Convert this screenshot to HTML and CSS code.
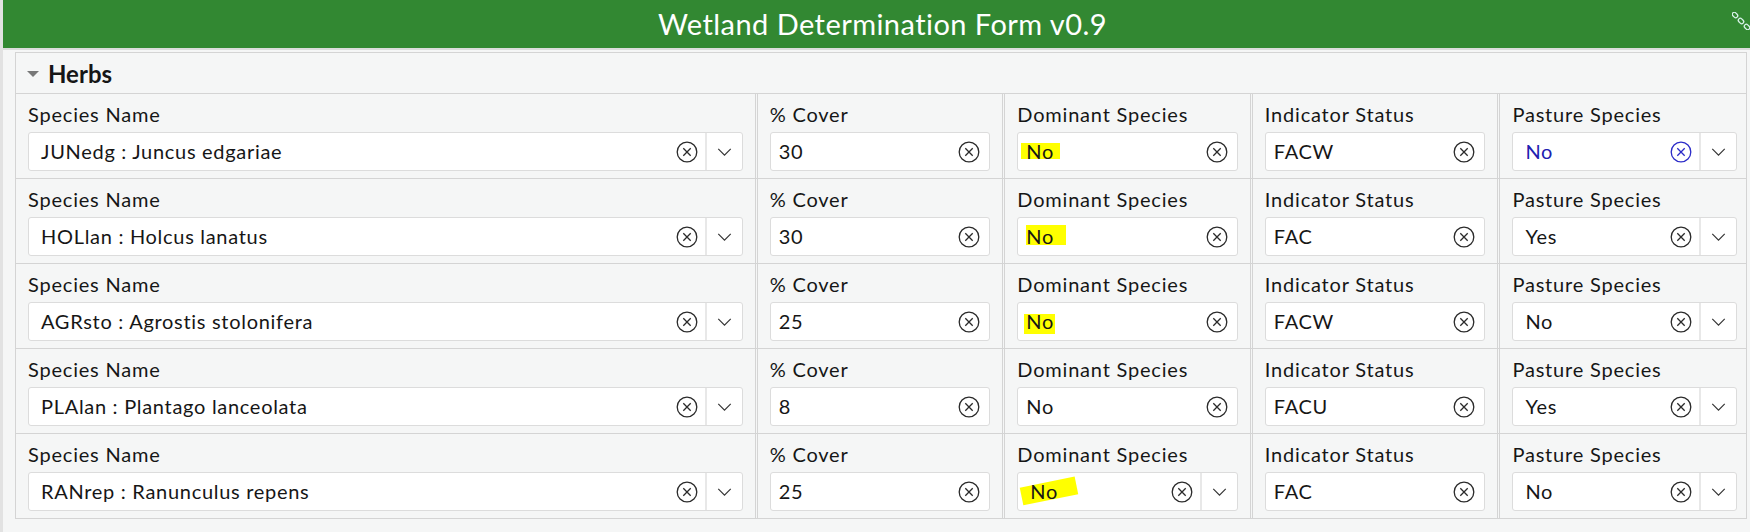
FILE: index.html
```html
<!DOCTYPE html>
<html lang="en">
<head>
<meta charset="utf-8">
<title>Wetland Determination Form v0.9</title>
<link rel="stylesheet" href="styles.css">
</head>
<body>
<div class="page">
  <header class="appbar">
    <span class="title">Wetland Determination Form v0.9</span>
    <svg class="appbar-icon" viewBox="0 0 18 18" aria-hidden="true">
      <g transform="rotate(45 9 9)" fill="none" stroke="#d9f2ea" stroke-width="1.3">
        <rect x="-2.5" y="7" width="6" height="4" rx="2"/>
        <rect x="6" y="7" width="6" height="4" rx="2"/>
        <rect x="14.5" y="7" width="6" height="4" rx="2"/>
      </g>
    </svg>
  </header>

  <section class="panel">
    <div class="group-head"><span class="caret"></span><span>Herbs</span></div>

    <div class="row">
      <div class="cell wide">
        <div class="label">Species Name</div>
        <div class="field combo"><span class="value">JUNedg : Juncus edgariae</span>
          <svg class="clear" viewBox="0 0 22 22"><circle cx="11" cy="11" r="9.8"/><path d="M7.3 7.3L14.7 14.7M14.7 7.3L7.3 14.7"/></svg>
          <span class="dd"><svg class="chev" viewBox="0 0 16 9"><path d="M1 1L8 8L15 1"/></svg></span></div>
      </div>
      <div class="cell">
        <div class="label">% Cover</div>
        <div class="field"><span class="value">30</span>
          <svg class="clear" viewBox="0 0 22 22"><circle cx="11" cy="11" r="9.8"/><path d="M7.3 7.3L14.7 14.7M14.7 7.3L7.3 14.7"/></svg></div>
      </div>
      <div class="cell">
        <div class="label">Dominant Species</div>
        <div class="field"><span class="value"><span class="hl hl-a">No</span></span>
          <svg class="clear" viewBox="0 0 22 22"><circle cx="11" cy="11" r="9.8"/><path d="M7.3 7.3L14.7 14.7M14.7 7.3L7.3 14.7"/></svg></div>
      </div>
      <div class="cell">
        <div class="label">Indicator Status</div>
        <div class="field"><span class="value">FACW</span>
          <svg class="clear" viewBox="0 0 22 22"><circle cx="11" cy="11" r="9.8"/><path d="M7.3 7.3L14.7 14.7M14.7 7.3L7.3 14.7"/></svg></div>
      </div>
      <div class="cell">
        <div class="label">Pasture Species</div>
        <div class="field combo focus"><span class="value">No</span>
          <svg class="clear" viewBox="0 0 22 22"><circle cx="11" cy="11" r="9.8"/><path d="M7.3 7.3L14.7 14.7M14.7 7.3L7.3 14.7"/></svg>
          <span class="dd"><svg class="chev" viewBox="0 0 16 9"><path d="M1 1L8 8L15 1"/></svg></span></div>
      </div>
    </div>

    <div class="row">
      <div class="cell wide">
        <div class="label">Species Name</div>
        <div class="field combo"><span class="value">HOLlan : Holcus lanatus</span>
          <svg class="clear" viewBox="0 0 22 22"><circle cx="11" cy="11" r="9.8"/><path d="M7.3 7.3L14.7 14.7M14.7 7.3L7.3 14.7"/></svg>
          <span class="dd"><svg class="chev" viewBox="0 0 16 9"><path d="M1 1L8 8L15 1"/></svg></span></div>
      </div>
      <div class="cell">
        <div class="label">% Cover</div>
        <div class="field"><span class="value">30</span>
          <svg class="clear" viewBox="0 0 22 22"><circle cx="11" cy="11" r="9.8"/><path d="M7.3 7.3L14.7 14.7M14.7 7.3L7.3 14.7"/></svg></div>
      </div>
      <div class="cell">
        <div class="label">Dominant Species</div>
        <div class="field"><span class="value"><span class="hl hl-b">No</span></span>
          <svg class="clear" viewBox="0 0 22 22"><circle cx="11" cy="11" r="9.8"/><path d="M7.3 7.3L14.7 14.7M14.7 7.3L7.3 14.7"/></svg></div>
      </div>
      <div class="cell">
        <div class="label">Indicator Status</div>
        <div class="field"><span class="value">FAC</span>
          <svg class="clear" viewBox="0 0 22 22"><circle cx="11" cy="11" r="9.8"/><path d="M7.3 7.3L14.7 14.7M14.7 7.3L7.3 14.7"/></svg></div>
      </div>
      <div class="cell">
        <div class="label">Pasture Species</div>
        <div class="field combo"><span class="value">Yes</span>
          <svg class="clear" viewBox="0 0 22 22"><circle cx="11" cy="11" r="9.8"/><path d="M7.3 7.3L14.7 14.7M14.7 7.3L7.3 14.7"/></svg>
          <span class="dd"><svg class="chev" viewBox="0 0 16 9"><path d="M1 1L8 8L15 1"/></svg></span></div>
      </div>
    </div>

    <div class="row">
      <div class="cell wide">
        <div class="label">Species Name</div>
        <div class="field combo"><span class="value">AGRsto : Agrostis stolonifera</span>
          <svg class="clear" viewBox="0 0 22 22"><circle cx="11" cy="11" r="9.8"/><path d="M7.3 7.3L14.7 14.7M14.7 7.3L7.3 14.7"/></svg>
          <span class="dd"><svg class="chev" viewBox="0 0 16 9"><path d="M1 1L8 8L15 1"/></svg></span></div>
      </div>
      <div class="cell">
        <div class="label">% Cover</div>
        <div class="field"><span class="value">25</span>
          <svg class="clear" viewBox="0 0 22 22"><circle cx="11" cy="11" r="9.8"/><path d="M7.3 7.3L14.7 14.7M14.7 7.3L7.3 14.7"/></svg></div>
      </div>
      <div class="cell">
        <div class="label">Dominant Species</div>
        <div class="field"><span class="value"><span class="hl hl-c">No</span></span>
          <svg class="clear" viewBox="0 0 22 22"><circle cx="11" cy="11" r="9.8"/><path d="M7.3 7.3L14.7 14.7M14.7 7.3L7.3 14.7"/></svg></div>
      </div>
      <div class="cell">
        <div class="label">Indicator Status</div>
        <div class="field"><span class="value">FACW</span>
          <svg class="clear" viewBox="0 0 22 22"><circle cx="11" cy="11" r="9.8"/><path d="M7.3 7.3L14.7 14.7M14.7 7.3L7.3 14.7"/></svg></div>
      </div>
      <div class="cell">
        <div class="label">Pasture Species</div>
        <div class="field combo"><span class="value">No</span>
          <svg class="clear" viewBox="0 0 22 22"><circle cx="11" cy="11" r="9.8"/><path d="M7.3 7.3L14.7 14.7M14.7 7.3L7.3 14.7"/></svg>
          <span class="dd"><svg class="chev" viewBox="0 0 16 9"><path d="M1 1L8 8L15 1"/></svg></span></div>
      </div>
    </div>

    <div class="row">
      <div class="cell wide">
        <div class="label">Species Name</div>
        <div class="field combo"><span class="value">PLAlan : Plantago lanceolata</span>
          <svg class="clear" viewBox="0 0 22 22"><circle cx="11" cy="11" r="9.8"/><path d="M7.3 7.3L14.7 14.7M14.7 7.3L7.3 14.7"/></svg>
          <span class="dd"><svg class="chev" viewBox="0 0 16 9"><path d="M1 1L8 8L15 1"/></svg></span></div>
      </div>
      <div class="cell">
        <div class="label">% Cover</div>
        <div class="field"><span class="value">8</span>
          <svg class="clear" viewBox="0 0 22 22"><circle cx="11" cy="11" r="9.8"/><path d="M7.3 7.3L14.7 14.7M14.7 7.3L7.3 14.7"/></svg></div>
      </div>
      <div class="cell">
        <div class="label">Dominant Species</div>
        <div class="field"><span class="value">No</span>
          <svg class="clear" viewBox="0 0 22 22"><circle cx="11" cy="11" r="9.8"/><path d="M7.3 7.3L14.7 14.7M14.7 7.3L7.3 14.7"/></svg></div>
      </div>
      <div class="cell">
        <div class="label">Indicator Status</div>
        <div class="field"><span class="value">FACU</span>
          <svg class="clear" viewBox="0 0 22 22"><circle cx="11" cy="11" r="9.8"/><path d="M7.3 7.3L14.7 14.7M14.7 7.3L7.3 14.7"/></svg></div>
      </div>
      <div class="cell">
        <div class="label">Pasture Species</div>
        <div class="field combo"><span class="value">Yes</span>
          <svg class="clear" viewBox="0 0 22 22"><circle cx="11" cy="11" r="9.8"/><path d="M7.3 7.3L14.7 14.7M14.7 7.3L7.3 14.7"/></svg>
          <span class="dd"><svg class="chev" viewBox="0 0 16 9"><path d="M1 1L8 8L15 1"/></svg></span></div>
      </div>
    </div>

    <div class="row">
      <div class="cell wide">
        <div class="label">Species Name</div>
        <div class="field combo"><span class="value">RANrep : Ranunculus repens</span>
          <svg class="clear" viewBox="0 0 22 22"><circle cx="11" cy="11" r="9.8"/><path d="M7.3 7.3L14.7 14.7M14.7 7.3L7.3 14.7"/></svg>
          <span class="dd"><svg class="chev" viewBox="0 0 16 9"><path d="M1 1L8 8L15 1"/></svg></span></div>
      </div>
      <div class="cell">
        <div class="label">% Cover</div>
        <div class="field"><span class="value">25</span>
          <svg class="clear" viewBox="0 0 22 22"><circle cx="11" cy="11" r="9.8"/><path d="M7.3 7.3L14.7 14.7M14.7 7.3L7.3 14.7"/></svg></div>
      </div>
      <div class="cell">
        <div class="label">Dominant Species</div>
        <div class="field combo"><span class="value"><span class="hl hl-d">No</span></span>
          <svg class="clear" viewBox="0 0 22 22"><circle cx="11" cy="11" r="9.8"/><path d="M7.3 7.3L14.7 14.7M14.7 7.3L7.3 14.7"/></svg>
          <span class="dd"><svg class="chev" viewBox="0 0 16 9"><path d="M1 1L8 8L15 1"/></svg></span></div>
      </div>
      <div class="cell">
        <div class="label">Indicator Status</div>
        <div class="field"><span class="value">FAC</span>
          <svg class="clear" viewBox="0 0 22 22"><circle cx="11" cy="11" r="9.8"/><path d="M7.3 7.3L14.7 14.7M14.7 7.3L7.3 14.7"/></svg></div>
      </div>
      <div class="cell">
        <div class="label">Pasture Species</div>
        <div class="field combo"><span class="value">No</span>
          <svg class="clear" viewBox="0 0 22 22"><circle cx="11" cy="11" r="9.8"/><path d="M7.3 7.3L14.7 14.7M14.7 7.3L7.3 14.7"/></svg>
          <span class="dd"><svg class="chev" viewBox="0 0 16 9"><path d="M1 1L8 8L15 1"/></svg></span></div>
      </div>
    </div>
  </section>
</div>
</body>
</html>
```

FILE: styles.css
```css
* { box-sizing: border-box; }
html, body { margin: 0; padding: 0; }
body {
  font-family: Lato, "Noto Sans", sans-serif;
  color: #161616;
  background: #f5f6f6;
}
.page {
  height: 532px;
  overflow: hidden;
  border-left: 3px solid #e2e2e2;
  background: #f5f6f6;
}
.appbar {
  position: relative;
  height: 50px;
  padding-left: 12px;
  background: #328832;
  border-bottom: 2px solid #dcdcdc;
  color: #fff;
  text-align: center;
  font-size: 29px;
  letter-spacing: 0.45px;
  line-height: 48px;
}
.appbar-icon {
  position: absolute;
  right: 0;
  top: 12px;
  width: 18px;
  height: 18px;
}
.panel {
  margin: 2px 3px 0 12px;
  border: 1px solid #d4d4d4;
}
.group-head {
  height: 41px;
  border-bottom: 1px solid #d4d4d4;
  display: flex;
  align-items: center;
  gap: 9px;
  padding-left: 11px;
  font-weight: 700;
  font-size: 24px;
}
.caret {
  width: 0;
  height: 0;
  border-left: 6.5px solid transparent;
  border-right: 6.5px solid transparent;
  border-top: 6px solid #787878;
  margin-top: 2px;
}
.row {
  display: grid;
  grid-template-columns: 3fr 1fr 1fr 1fr 1fr;
  column-gap: 1px;
  height: 85px;
  border-bottom: 1px solid #d4d4d4;
}
.row:last-child {
  border-bottom: 0;
  height: 84px;
}
.cell {
  min-width: 0;
  padding: 8px 12px 7px;
  border-left: 1px solid #d4d4d4;
  border-right: 1px solid #d4d4d4;
}
.cell:first-child { border-left: 0; }
.cell:last-child { border-right: 0; padding-right: 9px; }
.label {
  height: 24px;
  line-height: 24px;
  font-size: 20px;
  letter-spacing: 0.8px;
  white-space: nowrap;
}
.field {
  position: relative;
  z-index: 0;
  margin-top: 6px;
  height: 39px;
  display: flex;
  align-items: center;
  background: #fff;
  border: 1px solid #dcdcdc;
  border-radius: 3px;
}
.value {
  flex: 1;
  min-width: 0;
  padding-left: 8px;
  font-size: 20px;
  letter-spacing: 0.7px;
  line-height: 37px;
  white-space: nowrap;
  overflow: hidden;
}
.combo .value { padding-left: 12px; }
.clear {
  flex: none;
  width: 22px;
  height: 22px;
  margin-right: 9px;
  fill: none;
  stroke: #2a2a2a;
  stroke-width: 1.3;
}
.combo .clear { margin-right: 7px; }
.dd {
  flex: none;
  width: 37px;
  height: 100%;
  display: flex;
  align-items: center;
  justify-content: center;
  border-left: 2px solid #e8e8e8;
}
.chev {
  width: 15px;
  height: 8px;
  fill: none;
  stroke: #333;
  stroke-width: 1.3;
}
.focus .value { color: #2020b0; }
.focus .clear { stroke: #2b2bc8; }

.hl { position: relative; }
.hl::before {
  content: "";
  position: absolute;
  z-index: -1;
  background: #ffff00;
}
.hl-a::before { left: -5px; right: -6px; top: 4px; bottom: 4px; }
.hl-b::before { left: 0; right: -12px; top: 1px; bottom: 3px; }
.hl-c::before { left: -2px; right: -1px; top: 5px; bottom: -1px; }
.hl-d::before { left: -9px; right: -19px; top: 3px; bottom: 3px; transform: rotate(-11.5deg); }
```
